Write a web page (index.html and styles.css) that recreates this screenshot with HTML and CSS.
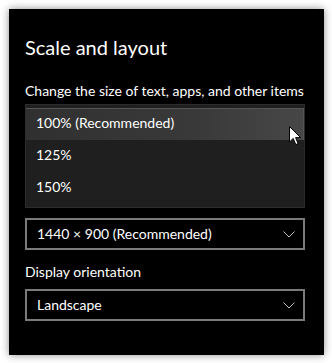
FILE: index.html
```html
<!DOCTYPE html>
<html lang="en">

<head>
    <meta charset="UTF-8">
    <meta name="viewport" content="width=device-width, initial-scale=1.0">
    <title>Scale and layout</title>
    <link rel="stylesheet" href="styles.css">
</head>

<body>
    <div class="panel">
        <h1>Scale and layout</h1>

        <p class="label">Change the size of text, apps, and other items</p>
        <ul class="menu">
            <li class="menu-item hover">
                100% (Recommended)
                <svg class="cursor" width="13" height="20" viewBox="0 0 13 20">
                    <path d="M0.5 0.5 L0.5 16 L4.2 12.4 L6.8 18.6 L9.1 17.6 L6.6 11.6 L11.6 11.6 Z"
                        fill="#fff" stroke="#000" stroke-width="1" stroke-linejoin="miter" />
                </svg>
            </li>
            <li class="menu-item">125%</li>
            <li class="menu-item">150%</li>
        </ul>

        <div class="select">
            <span>1440 × 900 (Recommended)</span>
            <svg class="chevron" width="12" height="7" viewBox="0 0 12 7">
                <path d="M0.5 0.5 L6 6 L11.5 0.5" fill="none" stroke="#bdbdbd" stroke-width="1" />
            </svg>
        </div>

        <p class="label label-gap">Display orientation</p>
        <div class="select">
            <span>Landscape</span>
            <svg class="chevron" width="12" height="7" viewBox="0 0 12 7">
                <path d="M0.5 0.5 L6 6 L11.5 0.5" fill="none" stroke="#bdbdbd" stroke-width="1" />
            </svg>
        </div>
    </div>
</body>

</html>
```

FILE: styles.css
```css
* {
    box-sizing: border-box;
    margin: 0;
    padding: 0;
}

body {
    background-color: #fff;
    font-family: Lato, "Liberation Sans", sans-serif;
    color: #fff;
}

.panel {
    width: 315px;
    height: 346px;
    margin: 9px;
    padding: 24px 19px 0 16px;
    background-color: #000;
    box-shadow: 0 0 8px rgba(0, 0, 0, 0.45);
}

h1 {
    font-size: 20px;
    font-weight: 400;
    line-height: 28px;
    margin-bottom: 20px;
}

.label {
    font-size: 14px;
    line-height: 20px;
    white-space: nowrap;
    margin-bottom: 3px;
}

.label-gap {
    margin-top: 12px;
    margin-bottom: 7px;
}

.menu {
    list-style: none;
    padding: 3px 0;
    background-color: #1f1f1f;
    border: 1px solid #2c2c2c;
    margin-bottom: 10px;
}

.menu-item {
    position: relative;
    height: 32px;
    line-height: 29px;
    padding-left: 10px;
    font-size: 14px;
}

.menu-item.hover {
    background: linear-gradient(to right, #303030 0%, #393939 60%, #474747 100%);
    box-shadow: inset -1px 1px 0 #555;
}

.cursor {
    position: absolute;
    left: 263px;
    top: 18px;
}

.select {
    display: flex;
    align-items: center;
    justify-content: space-between;
    height: 32px;
    padding: 0 8px 0 10px;
    border: 2px solid #7a7a7a;
    font-size: 14px;
    line-height: 20px;
}

.chevron {
    display: block;
}
```
